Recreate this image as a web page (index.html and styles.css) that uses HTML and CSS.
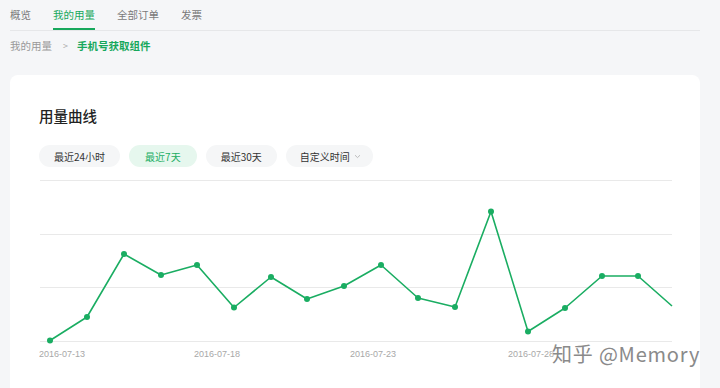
FILE: index.html
```html
<!DOCTYPE html>
<html lang="zh">
<head>
<meta charset="utf-8">
<link rel="stylesheet" href="styles.css">
</head>
<body>
<div class="page">
  <nav class="tabs">
    <span class="tab">概览</span>
    <span class="tab active">我的用量</span>
    <span class="tab">全部订单</span>
    <span class="tab">发票</span>
  </nav>
  <div class="crumbs">
    <span class="crumb">我的用量</span>
    <span class="sep">&gt;</span>
    <span class="crumb current">手机号获取组件</span>
  </div>
  <section class="card">
    <h2 class="title">用量曲线</h2>
    <div class="filters">
      <span class="pill">最近24小时</span>
      <span class="pill on">最近7天</span>
      <span class="pill">最近30天</span>
      <span class="pill drop">自定义时间 <svg class="chev" width="7" height="5" viewBox="0 0 7 5"><path d="M1 1.2 L3.5 3.6 L6 1.2" fill="none" stroke="#b5b5b5" stroke-width="0.9"/></svg></span>
    </div>
    <svg class="chart" width="661" height="200" viewBox="0 0 661 200">
      <g stroke="#e9e9e9" stroke-width="1">
        <line x1="1" y1="5.5" x2="633" y2="5.5"/>
        <line x1="1" y1="59.5" x2="633" y2="59.5"/>
        <line x1="1" y1="112.5" x2="633" y2="112.5"/>
        <line x1="1" y1="166.5" x2="633" y2="166.5"/>
      </g>
      <polyline fill="none" stroke="#1aad62" stroke-width="1.6" stroke-linejoin="round"
        points="11,165.5 48,142 85,79 122,100 158,90 195,132.5 232,102 268,124 305,111 342,90 379,123 416,132 452,36.5 489,156.5 526,133 563,101 599,101 633,131"/>
      <g fill="#1aad62">
        <circle cx="11" cy="165.5" r="3"/>
        <circle cx="48" cy="142" r="3"/>
        <circle cx="85" cy="79" r="3"/>
        <circle cx="122" cy="100" r="3"/>
        <circle cx="158" cy="90" r="3"/>
        <circle cx="195" cy="132.5" r="3"/>
        <circle cx="232" cy="102" r="3"/>
        <circle cx="268" cy="124" r="3"/>
        <circle cx="305" cy="111" r="3"/>
        <circle cx="342" cy="90" r="3"/>
        <circle cx="379" cy="123" r="3"/>
        <circle cx="416" cy="132" r="3"/>
        <circle cx="452" cy="36.5" r="3"/>
        <circle cx="489" cy="156.5" r="3"/>
        <circle cx="526" cy="133" r="3"/>
        <circle cx="563" cy="101" r="3"/>
        <circle cx="599" cy="101" r="3"/>
      </g>
      <g class="axis" fill="#a8a8a8" font-size="9">
        <text x="0" y="182">2016-07-13</text>
        <text x="155" y="182">2016-07-18</text>
        <text x="311" y="182">2016-07-23</text>
        <text x="469" y="182">2016-07-28</text>
      </g>
    </svg>
  </section>
</div>
<div class="mark">知乎 @Memory</div>
</body>
</html>
```
FILE: styles.css
```css
html, body {
  margin: 0;
  padding: 0;
}
body {
  background: #f5f6f8;
  font-family: "Noto Sans CJK SC", "Noto Sans", sans-serif;
  width: 720px;
  height: 388px;
  overflow: hidden;
  position: relative;
}
.page {
  padding: 0 20px 0 10px;
}
.tabs {
  display: flex;
  gap: 22px;
  height: 30px;
  border-bottom: 1px solid #e6e7e9;
}
.tab {
  font-size: 10.5px;
  line-height: 30px;
  color: #7a7a7a;
  box-sizing: border-box;
  height: 30px;
}
.tab.active {
  color: #17a85c;
  border-bottom: 2px solid #17a85c;
}
.crumbs {
  display: flex;
  align-items: center;
  height: 28px;
  font-size: 10.5px;
  color: #9a9a9a;
}
.sep {
  margin: 0 9px 0 11px;
  font-size: 9px;
  color: #aaa;
}
.crumb.current {
  color: #17a85c;
  font-weight: 700;
}
.crumb:first-child {
  color: #999;
}
.card {
  margin-top: 16px;
  background: #fff;
  border-radius: 8px;
  padding: 31px 0 0 29px;
  height: 340px;
  box-sizing: border-box;
}
.title {
  margin: 0;
  font-size: 14.5px;
  font-weight: 500;
  line-height: 20px;
  color: #222;
}
.filters {
  display: flex;
  gap: 9px;
  margin-top: 19px;
}
.pill {
  display: flex;
  align-items: center;
  gap: 4px;
  height: 22px;
  padding: 0 15px;
  border-radius: 11px;
  background: #f5f6f7;
  font-size: 10px;
  color: #333;
}
.pill.on {
  background: #e6f7ee;
  color: #1aad62;
  padding: 0 16px;
}
.pill.drop {
  padding: 0 12px 0 14px;
}
.chev {
  display: block;
}
.chart {
  display: block;
  margin-top: 8px;
}
.axis {
  font-family: "Liberation Sans", sans-serif;
}
.mark {
  position: absolute;
  left: 552px;
  top: 340px;
  font-size: 20px;
  line-height: 28px;
  color: #8a8a8a;
  font-family: "Noto Sans CJK SC", "Liberation Sans", sans-serif;
  text-shadow: 0 0 2px #fff, 0 0 2px #fff;
  letter-spacing: 0.8px;
}
```
